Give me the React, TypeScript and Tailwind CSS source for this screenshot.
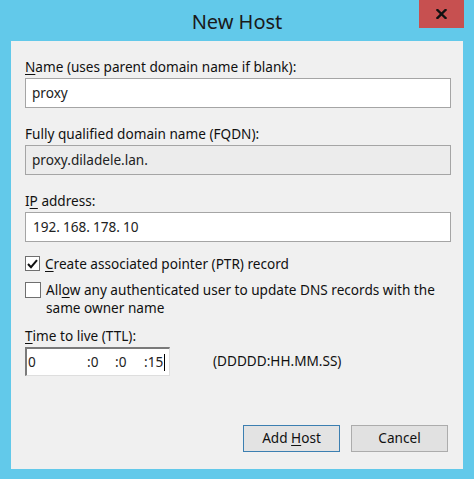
import React from "react";

const font = { fontFamily: '"Noto Sans", "Open Sans", sans-serif' };

function Label({ children }: { children: React.ReactNode }) {
  return <div className="text-[13.6px] leading-[19px] text-[#111] mb-[2px]">{children}</div>;
}

function U({ children }: { children: React.ReactNode }) {
  return <span className="underline underline-offset-[2px] decoration-[1px]">{children}</span>;
}

export default function App() {
  return (
    <div
      className="w-[474px] h-[479px] bg-[#62c9ea] flex flex-col overflow-hidden"
      style={font}
    >
      <div className="relative h-[41px] flex items-center justify-center shrink-0">
        <span className="text-[20px] leading-[24px] text-[#1a1a1a] mt-[2px]">New Host</span>
        <div className="absolute left-[419px] top-0 w-[45px] h-[28px] bg-[#c75050] flex items-center justify-center">
          <svg width="11" height="10" viewBox="0 0 11 10">
            <path d="M1.5 1 L9.5 9 M9.5 1 L1.5 9" stroke="#111" strokeWidth="2.4" strokeLinecap="square" />
          </svg>
        </div>
      </div>
      <div className="mx-[11px] h-[428px] bg-[#f0f0f0] flex flex-col pl-[14px] pr-[12px] pt-[16px] pb-[17px]">
        <Label>
          <U>N</U>ame (uses parent domain name if blank):
        </Label>
        <div className="h-[30px] bg-white border border-[#a5a5a5] flex items-center pl-[6px] text-[13.6px] text-[#222]">
          proxy
        </div>
        <div className="mt-[16px]">
          <Label>Fully qualified domain name (FQDN):</Label>
        </div>
        <div className="h-[30px] bg-[#ececec] border border-[#a5a5a5] flex items-center pl-[6px] text-[13.6px] text-[#222]">
          proxy.diladele.lan.
        </div>
        <div className="mt-[16px]">
          <Label>
            I<U>P</U> address:
          </Label>
        </div>
        <div className="h-[30px] bg-white border border-[#a5a5a5] flex items-center pl-[7px] text-[13.6px] text-[#222]">
          <span>192.</span>
          <span className="ml-[3px]">168.</span>
          <span className="ml-[3px]">178.</span>
          <span className="ml-[3px]">10</span>
        </div>
        <div className="mt-[12px] flex items-center gap-[5px] h-[19px]">
          <div className="w-[15px] h-[15px] bg-white border border-[#6f6f6f] flex items-center justify-center shrink-0">
            <svg width="11" height="10" viewBox="0 0 11 10">
              <path d="M1 5 L4 8.2 L10 1.2" fill="none" stroke="#111" strokeWidth="2" />
            </svg>
          </div>
          <span className="text-[13.6px] leading-[19px] text-[#111]">
            <U>C</U>reate associated pointer (PTR) record
          </span>
        </div>
        <div className="mt-[8px] flex items-start gap-[5px]">
          <div className="w-[16px] h-[16px] mt-[1px] bg-white border border-[#6f6f6f] shrink-0" />
          <span className="text-[13.6px] leading-[18px] text-[#111]">
            All<U>o</U>w any authenticated user to update DNS records with the
            <br />
            same owner name
          </span>
        </div>
        <div className="mt-[9px]">
          <Label>
            <U>T</U>ime to live (TTL):
          </Label>
        </div>
        <div className="flex items-center">
          <div className="w-[145px] h-[29px] bg-white border-t-2 border-l-2 border-r border-b border-t-[#7a7a7a] border-l-[#7a7a7a] border-r-[#dedede] border-b-[#dedede] flex items-center text-[13.6px] text-[#222]">
            <span className="w-[60px] pl-[1px]">0</span>
            <span className="w-[28px]">:0</span>
            <span className="w-[29px]">:0</span>
            <span>:15</span>
            <span className="w-[1px] h-[17px] bg-black ml-[1px]" />
          </div>
          <span className="ml-[43px] text-[13.6px] text-[#111]">(DDDDD:HH.MM.SS)</span>
        </div>
        <div className="mt-auto flex justify-end gap-[11px] mr-[3px]">
          <div className="w-[97px] h-[27px] border border-[#3c7fb1] bg-[#e3e3e3] flex items-center justify-center text-[13.6px] text-[#111]">
            <span>
              Add <U>H</U>ost
            </span>
          </div>
          <div className="w-[97px] h-[27px] border border-[#acacac] bg-[#e1e1e1] flex items-center justify-center text-[13.6px] text-[#111]">
            Cancel
          </div>
        </div>
      </div>
      <div className="h-[10px]" />
    </div>
  );
}
